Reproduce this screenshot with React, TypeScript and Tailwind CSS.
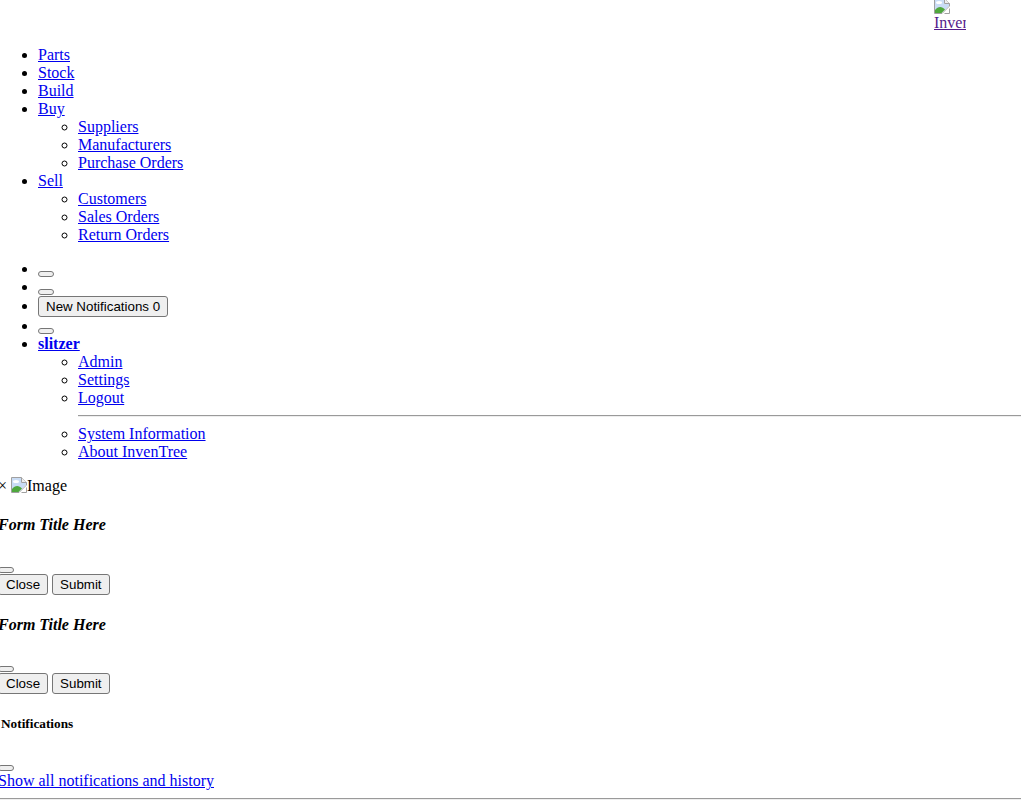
const serif = '[font-family:"Liberation_Serif",serif]';

function BrokenImage({ className = "" }: { className?: string }) {
  return (
    <svg width="16" height="16" viewBox="0 0 16 16" className={`shrink-0 ${className}`}>
      <path d="M0.5 0.5H10.5L15.5 5.5V8L8 15.5H0.5Z" fill="#fff" stroke="#a0a0a0" />
      <path d="M1 1H10V6H15V8L7.5 15H1Z" fill="#c9dcf5" />
      <ellipse cx="5" cy="4.5" rx="3" ry="1.5" fill="#fff" />
      <path d="M1 15V12C4 8 8 8 11 11.5L7.5 15Z" fill="#4fa83d" />
      <path d="M10.5 0.5V5.5H15.5" fill="#eeeeee" stroke="#a0a0a0" />
      <path d="M15.5 10.5V15.5H10.5" fill="none" stroke="#a0a0a0" />
    </svg>
  );
}

function Link({ children, bold }: { children: React.ReactNode; bold?: boolean }) {
  return (
    <a href="#" className={`text-[#0000ee] underline ${bold ? "font-bold" : ""}`}>
      {children}
    </a>
  );
}

function Btn({ children }: { children?: React.ReactNode }) {
  return (
    <button className="block h-[21px] rounded-[3px] border border-[#767676] bg-[#efefef] px-[7px] text-[13.333px] leading-[15px] text-black [font-family:'Liberation_Sans',sans-serif]">
      {children}
    </button>
  );
}

function EmptyBtn() {
  return <button className="block h-[6px] w-4 rounded-[3px] border border-[#767676] bg-[#efefef]" />;
}

function FormBlock({ tight }: { tight?: boolean }) {
  return (
    <div>
      <h3 className="mt-[21px] text-base leading-[18px] font-bold italic">Form Title Here</h3>
      <div className={tight ? "mt-8" : "mt-[33px]"}>
        <EmptyBtn />
      </div>
      <div className="mt-px flex gap-1">
        <Btn>Close</Btn>
        <Btn>Submit</Btn>
      </div>
    </div>
  );
}

function Rule({ className = "" }: { className?: string }) {
  return <hr className={`h-0.5 border-x-0 border-t border-b border-t-[#9a9a9a] border-b-[#eeeeee] ${className}`} />;
}

export default function App() {
  return (
    <div className={`h-[800px] overflow-hidden bg-white text-base leading-[18px] text-black ${serif}`}>
      <div className="flex h-[46px] justify-end pr-[55px]">
        <a href="#" className="block h-8 w-8 overflow-hidden whitespace-nowrap text-[#551a8b] underline">
          <BrokenImage className="-mt-0.5 block" />
          InvenTree logo
        </a>
      </div>

      <ul className="list-disc pl-[38px]">
        <li><Link>Parts</Link></li>
        <li><Link>Stock</Link></li>
        <li><Link>Build</Link></li>
        <li>
          <Link>Buy</Link>
          <ul className="list-[circle] pl-10">
            <li><Link>Suppliers</Link></li>
            <li><Link>Manufacturers</Link></li>
            <li><Link>Purchase Orders</Link></li>
          </ul>
        </li>
        <li>
          <Link>Sell</Link>
          <ul className="list-[circle] pl-10">
            <li><Link>Customers</Link></li>
            <li><Link>Sales Orders</Link></li>
            <li><Link>Return Orders</Link></li>
          </ul>
        </li>
      </ul>

      <ul className="mt-4 list-disc pl-[38px]">
        <li className="h-[18px] pt-[11px]"><EmptyBtn /></li>
        <li className="h-[18px] pt-[11px]"><EmptyBtn /></li>
        <li><Btn>New Notifications 0</Btn></li>
        <li className="h-[18px] pt-[11px]"><EmptyBtn /></li>
        <li>
          <Link bold>slitzer</Link>
          <ul className="list-[circle] pl-10">
            <li><Link>Admin</Link></li>
            <li><Link>Settings</Link></li>
            <li><Link>Logout</Link></li>
            <li className="list-none"><Rule className="my-2" /></li>
            <li><Link>System Information</Link></li>
            <li><Link>About InvenTree</Link></li>
          </ul>
        </li>
      </ul>

      <div className="mt-4 -ml-0.5">
        <div className="flex items-start">
          <span className="w-[13px]">×</span>
          <BrokenImage />
          <span>Image</span>
        </div>

        <FormBlock />
        <FormBlock tight />

        <h5 className="mt-[22px] pl-[3px] text-[13.28px] leading-[15px] font-bold">Notifications</h5>
        <div className="mt-[34px]">
          <EmptyBtn />
        </div>
        <div className="mt-px">
          <Link>Show all notifications and history</Link>
        </div>
      </div>
      <Rule className="mt-2" />
    </div>
  );
}
